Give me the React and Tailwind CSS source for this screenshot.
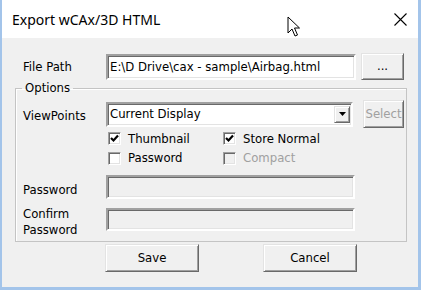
import React from 'react';

const font = { fontFamily: '"DejaVu Sans Condensed", "DejaVu Sans", sans-serif' };

const sunken = 'border-2 border-t-[#a0a0a0] border-l-[#a0a0a0] border-b-white border-r-white shadow-[inset_1px_1px_0_#696969,inset_-1px_-1px_0_#e3e3e3]';
const raised = 'border border-t-[#e3e3e3] border-l-[#e3e3e3] border-r-[#696969] border-b-[#696969] shadow-[inset_1px_1px_0_#fff,inset_-1px_-1px_0_#a0a0a0] bg-[#f0f0f0]';

const Check = ({ checked, disabled }) => (
  <div className={`w-[13px] h-[13px] shrink-0 flex items-center justify-center border border-t-[#a0a0a0] border-l-[#a0a0a0] border-b-white border-r-white shadow-[inset_1px_1px_0_#696969,inset_-1px_-1px_0_#e3e3e3] ${disabled ? 'bg-[#f0f0f0]' : 'bg-white'}`}>
    {checked && (
      <svg width="9" height="9" viewBox="0 0 9 9">
        <path d="M1 4 L3.5 6.5 L8 1.5" fill="none" stroke="#000" strokeWidth="2.2" />
      </svg>
    )}
  </div>
);

const CheckItem = ({ label, checked, disabled, className = '' }) => (
  <div className={`flex items-center gap-[7px] ${className}`}>
    <Check checked={checked} disabled={disabled} />
    <span className={disabled ? 'text-[#a0a0a0]' : 'text-black'}>{label}</span>
  </div>
);

export default function App() {
  return (
    <div className="w-[421px] h-[290px] relative overflow-hidden flex flex-col bg-[#f0f0f0] border-l-2 border-r-[3px] border-b-[3px] border-[#a3c4ea] text-[13px] leading-4 text-black" style={font}>
      {/* title bar */}
      <div className="h-[38px] shrink-0 bg-white flex items-center pl-[10px] pr-[11px]">
        <span className="text-[14px] pt-[2px] text-black" style={{ fontFamily: '"Noto Sans", sans-serif' }}>Export wCAx/3D HTML</span>
        <svg className="ml-auto mt-[1px]" width="13" height="13" viewBox="0 0 13 13">
          <path d="M0.5 0.5 L12.5 12.5 M12.5 0.5 L0.5 12.5" stroke="#000" strokeWidth="1.1" />
        </svg>
      </div>

      {/* mouse pointer */}
      <svg className="absolute left-[285px] top-[16px]" width="14" height="22" viewBox="0 0 14 22">
        <path d="M1 1 L1 17 L5 13 L8 20 L10.5 19 L7.5 12 L12.5 12 Z" fill="#fff" stroke="#000" strokeWidth="1" strokeLinejoin="round" />
      </svg>

      {/* file path */}
      <div className="mt-[15px] ml-[21px] flex items-center h-[27px]">
        <span className="w-[83px]">File Path</span>
        <div className={`w-[250px] h-[26px] bg-white flex items-center pl-[2px] ${sunken}`}>
          E:\D Drive\cax - sample\Airbag.html
        </div>
        <button className={`ml-[5px] w-[43px] h-[27px] flex items-center justify-center pb-[2px] ${raised}`}>...</button>
      </div>

      {/* options */}
      <fieldset className="ml-[13px] w-[392px] border border-[#c4c4c4] shadow-[inset_1px_1px_0_#fff] px-0 pb-[3px]">
        <legend className="ml-[6px] px-[3px] leading-4">Options</legend>

        <div className="mt-[4px] pl-[7px] flex items-center">
          <span className="w-[83px] pt-[3px]">ViewPoints</span>
          <div className={`w-[247px] h-[25px] bg-white flex items-center pl-[2px] ${sunken}`}>
            <span>Current Display</span>
            <div className={`ml-auto mr-[1px] w-[16px] h-[17px] flex items-center justify-center ${raised}`}>
              <svg width="7" height="4" viewBox="0 0 7 4"><path d="M0 0 H7 L3.5 4 Z" fill="#000" /></svg>
            </div>
          </div>
          <button className={`ml-[10px] w-[41px] h-[28px] flex items-center justify-center text-[#a0a0a0] ${raised}`}>Select</button>
        </div>

        <div className="pl-[92px] pt-[1px] flex h-[20px] items-center">
          <CheckItem label="Thumbnail" checked className="w-[115px]" />
          <CheckItem label="Store Normal" checked />
        </div>
        <div className="pl-[92px] flex h-[20px] items-center">
          <CheckItem label="Password" className="w-[115px]" />
          <CheckItem label="Compact" disabled />
        </div>

        <div className="mt-[7px] pl-[7px] flex items-center">
          <span className="w-[83px] pt-[6px]">Password</span>
          <div className={`w-[249px] h-[24px] bg-[#f0f0f0] ${sunken}`} />
        </div>
        <div className="mt-[3px] pl-[7px] flex items-start">
          <span className="w-[83px] leading-4 mt-[4px]">Confirm<br />Password</span>
          <div className={`mt-[6px] w-[249px] h-[23px] bg-[#f0f0f0] ${sunken}`} />
        </div>
      </fieldset>

      {/* buttons */}
      <div className="mt-[2px] flex pl-[103px] gap-[64px]">
        <button className={`w-[94px] h-[28px] flex items-center justify-center ${raised}`}>Save</button>
        <button className={`w-[94px] h-[28px] flex items-center justify-center ${raised}`}>Cancel</button>
      </div>
    </div>
  );
}
